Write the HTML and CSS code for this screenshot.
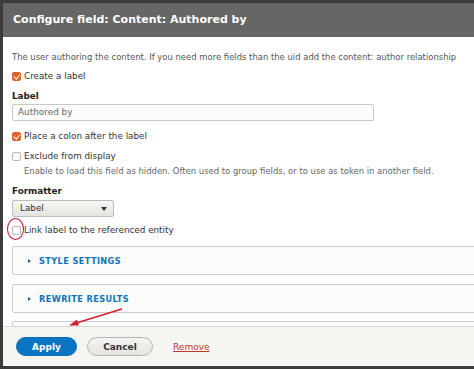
FILE: index.html
```html
<!DOCTYPE html>
<html>
<head>
<meta charset="utf-8">
<link rel="stylesheet" href="styles.css">
</head>
<body>
<div class="dialog">
  <div class="titlebar">Configure field: Content: Authored by</div>
  <div class="content">
    <p class="desc">The user authoring the content. If you need more fields than the uid add the content: author relationship</p>
    <label class="check row-create"><span class="box checked"></span>Create a label</label>
    <div class="flabel">Label</div>
    <div class="input">Authored by</div>
    <label class="check row-colon"><span class="box checked"></span>Place a colon after the label</label>
    <label class="check row-exclude"><span class="box"></span>Exclude from display</label>
    <div class="help">Enable to load this field as hidden. Often used to group fields, or to use as token in another field.</div>
    <div class="flabel row-formatter">Formatter</div>
    <div class="select"><span>Label</span><span class="caret"></span></div>
    <label class="check row-link"><span class="box"></span>Link label to the referenced entity</label>
    <div class="details first"><span class="tri"></span>STYLE SETTINGS</div>
    <div class="details second"><span class="tri"></span>REWRITE RESULTS</div>
    <div class="details third"></div>
  </div>
  <div class="buttons">
    <span class="btn primary">Apply</span>
    <span class="btn">Cancel</span>
    <a class="remove">Remove</a>
  </div>
</div>
<div class="circle"></div>
<svg class="arrow" width="60" height="22" viewBox="0 0 60 22">
  <line x1="55" y1="2" x2="6" y2="17" stroke="#d0202e" stroke-width="1.6"/>
  <polygon points="2,18.5 10,12.5 12,18.5" fill="#d0202e"/>
</svg>
</body>
</html>
```
FILE: styles.css
```css
html, body { margin: 0; padding: 0; }
body {
  background: #3b3b3b;
  width: 474px;
  height: 369px;
  overflow: hidden;
  position: relative;
  font-family: "DejaVu Sans", sans-serif;
}
.dialog {
  margin: 3px 0 0 3px;
  width: 490px;
  background: #fff;
}
.titlebar {
  height: 34px;
  background: #666;
  color: #fff;
  font-weight: bold;
  font-size: 11px;
  line-height: 34px;
  padding-left: 10px;
}
.content {
  height: 289px;
  overflow: hidden;
  padding: 0 0 0 9px;
  display: flex;
  flex-direction: column;
  align-items: flex-start;
}
.content > * { flex-shrink: 0; }
.desc {
  margin: 15px 0 0 0;
  font-size: 8.45px;
  color: #555;
  line-height: 10px;
  white-space: nowrap;
}
.check {
  display: flex;
  align-items: center;
  font-size: 8.8px;
  color: #333;
  line-height: 12px;
}
.box {
  width: 9px;
  height: 9px;
  border: 1px solid #b8b8b8;
  border-radius: 2px;
  background: #fafafa;
  margin-right: 3px;
  box-sizing: border-box;
}
.box.checked {
  background: #e0622b;
  border-color: #d9652e;
  position: relative;
}
.box.checked::after {
  content: "";
  position: absolute;
  left: 2px;
  top: 0px;
  width: 2.5px;
  height: 4.5px;
  border-right: 1.3px solid #fff;
  border-bottom: 1.3px solid #fff;
  transform: rotate(40deg);
}
.row-create { margin-top: 8px; }
.flabel {
  font-weight: bold;
  font-size: 8.8px;
  color: #222;
  margin-top: 8px;
  line-height: 12px;
}
.input {
  margin-top: 2px;
  width: 362px;
  height: 17px;
  box-sizing: border-box;
  border: 1px solid #c8c8c8;
  border-radius: 2px;
  background: #fcfcfa;
  font-size: 8.9px;
  color: #666;
  line-height: 15px;
  padding-left: 5px;
}
.row-colon { margin-top: 9px; }
.row-exclude { margin-top: 8px; }
.help {
  font-size: 8.45px;
  color: #666;
  line-height: 10px;
  margin: 4px 0 0 12px;
  white-space: nowrap;
}
.row-formatter { margin-top: 9px; }
.select {
  margin-top: 3px;
  width: 102px;
  height: 17px;
  box-sizing: border-box;
  border: 1px solid #bdbdbd;
  border-radius: 2px;
  background: linear-gradient(#f6f6f3, #e4e4e0);
  font-size: 8.8px;
  color: #333;
  line-height: 15px;
  padding-left: 7px;
  display: flex;
  justify-content: space-between;
  align-items: center;
  padding-right: 6px;
}
.caret {
  width: 0; height: 0;
  border-left: 3px solid transparent;
  border-right: 3px solid transparent;
  border-top: 4px solid #333;
}
.row-link { margin-top: 7px; }
.details {
  width: 470px;
  height: 29px;
  box-sizing: border-box;
  border: 1px solid #ccc;
  border-radius: 2px;
  background: #fbfbf9;
  display: flex;
  align-items: center;
  padding-left: 15px;
  font-size: 8.2px;
  font-weight: bold;
  color: #0f74b8;
  letter-spacing: 0.4px;
}
.details.first { margin-top: 10px; }
.details.second { margin-top: 9px; }
.details.third { margin-top: 8px; }
.tri {
  width: 0; height: 0;
  border-top: 2.5px solid transparent;
  border-bottom: 2.5px solid transparent;
  border-left: 3.5px solid #1a5f96;
  margin-right: 8px;
}
.buttons {
  height: 40px;
  box-sizing: border-box;
  background: #f5f5f2;
  border-top: 1px solid #d8d8d4;
  display: flex;
  align-items: center;
  padding-left: 13px;
}
.btn {
  height: 19px;
  box-sizing: border-box;
  border-radius: 10px;
  border: 1px solid #b4b4b0;
  background: linear-gradient(#f4f4f2, #e4e4e0);
  font-size: 9px;
  font-weight: bold;
  color: #333;
  display: flex;
  align-items: center;
  justify-content: center;
  width: 66px;
  margin-right: 10px;
}
.btn.primary {
  width: 61px;
  background: #0b75c4;
  border-color: #0a6db5;
  color: #fff;
}
.remove {
  margin-left: 10px;
  font-size: 9px;
  color: #c0392b;
  text-decoration: underline;
}
.circle {
  position: absolute;
  left: 7px;
  top: 218px;
  width: 17px;
  height: 22px;
  box-sizing: border-box;
  border: 1.6px solid #c8102e;
  border-radius: 50%;
}
.arrow {
  position: absolute;
  left: 67px;
  top: 307px;
}
```
